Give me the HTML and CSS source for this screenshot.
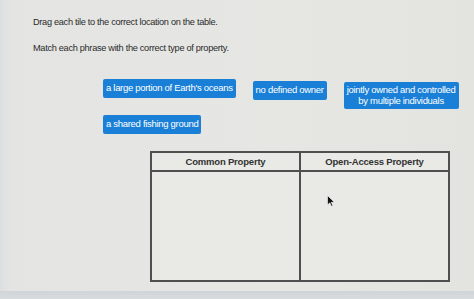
FILE: index.html
```html
<!DOCTYPE html>
<html lang="en">
<head>
    <meta charset="UTF-8">
    <title>Drag and drop: property types</title>
    <link rel="stylesheet" href="styles.css">
</head>
<body>
    <div class="page">
        <p class="prompt">Drag each tile to the correct location on the table.</p>
        <p class="prompt second">Match each phrase with the correct type of property.</p>

        <div class="tiles">
            <div class="tile-row">
                <div class="tile">a large portion of Earth's oceans</div>
                <div class="tile">no defined owner</div>
                <div class="tile two-line">jointly owned and controlled<br>by multiple individuals</div>
            </div>
            <div class="tile-row">
                <div class="tile">a shared fishing ground</div>
            </div>
        </div>

        <div class="board">
            <table class="drop-table">
                <thead>
                    <tr>
                        <th>Common Property</th>
                        <th>Open-Access Property</th>
                    </tr>
                </thead>
                <tbody>
                    <tr>
                        <td></td>
                        <td class="cursor-cell">
                            <svg class="cursor" width="8" height="12" viewBox="0 0 8 12">
                                <path d="M0.5 0.5 L0.5 10 L2.8 7.8 L4.4 11.3 L5.8 10.7 L4.3 7.3 L7.4 7.3 Z" fill="#111" stroke="#fff" stroke-width="0.6"/>
                            </svg>
                        </td>
                    </tr>
                </tbody>
            </table>
        </div>
    </div>
    <div class="bottom-edge"></div>
</body>
</html>
```

FILE: styles.css
```css
html, body {
    height: 100%;
}
body {
    margin: 0;
    font-family: "Liberation Sans", Arial, sans-serif;
    background: linear-gradient(90deg, #dcdfe2 0px, #e4e5e3 12px, #e6e6e3 60%, #e3e3e0 100%);
    color: #2b2b2b;
    overflow: hidden;
    position: relative;
}
.page {
    padding: 17px 0 0 33px;
}
.prompt {
    margin: 0;
    font-size: 9.2px;
    line-height: 11px;
    letter-spacing: -0.3px;
    color: #2a2a2a;
}
.prompt.second {
    margin-top: 15px;
}
.tiles {
    margin: 25px 0 0 70px;
}
.tile-row {
    display: flex;
    align-items: flex-start;
    gap: 17px;
}
.tile-row + .tile-row {
    margin-top: 6px;
}
.tile {
    background: #1a7fd6;
    color: #ffffff;
    font-size: 9.5px;
    line-height: 11px;
    letter-spacing: -0.3px;
    padding: 3px 3px 5px 3px;
    border-radius: 2px;
    white-space: nowrap;
}
.tile-row .tile:nth-child(2) {
    margin-top: 2px;
}
.tile.two-line {
    text-align: center;
    margin-top: 3px;
    padding: 2px 3px 3px 3px;
}
.board {
    margin: 17px 0 0 117px;
}
.drop-table {
    width: 300px;
    border-collapse: collapse;
    background: #e9e9e6;
}
.drop-table th,
.drop-table td {
    border: 2px solid #4f4f4f;
}
.drop-table th {
    font-size: 9.5px;
    font-weight: bold;
    letter-spacing: -0.2px;
    color: #333;
    height: 17px;
    padding: 0;
    width: 50%;
}
.drop-table td {
    height: 108px;
    padding: 0;
}
.cursor-cell {
    position: relative;
}
.cursor {
    position: absolute;
    left: 26px;
    top: 23px;
}
.bottom-edge {
    position: absolute;
    left: 0;
    right: 0;
    bottom: 0;
    height: 8px;
    background: linear-gradient(180deg, #cfd4d8, #d9dcdf);
}
```
